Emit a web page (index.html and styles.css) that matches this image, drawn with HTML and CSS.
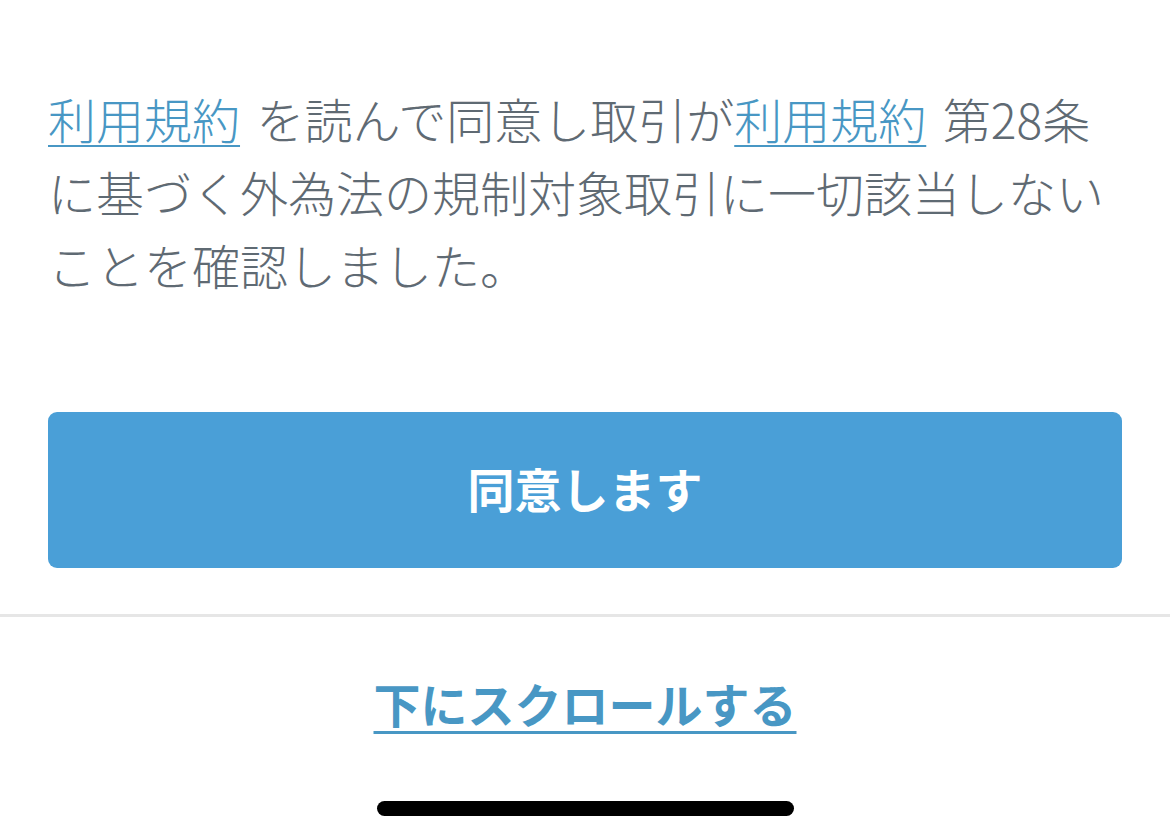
FILE: index.html
```html
<!DOCTYPE html>
<html lang="ja">
<head>
<meta charset="utf-8">
<title>同意</title>
<link rel="stylesheet" href="styles.css">
</head>
<body>
<main class="screen">
  <section class="content">
    <p class="terms"><a class="link" href="#">利用規約</a> を読んで同意し取引が<a class="link" href="#">利用規約</a> 第28条に基づく外為法の規制対象取引に一切該当しないことを確認しました。</p>
    <button class="agree-btn" type="button">同意します</button>
  </section>
  <div class="divider"></div>
  <section class="footer">
    <a class="scroll-link" href="#">下にスクロールする</a>
    <div class="home-indicator"></div>
  </section>
</main>
</body>
</html>
```
FILE: styles.css
```css
html, body {
  margin: 0;
  padding: 0;
  background: #ffffff;
}
body {
  width: 1170px;
  height: 840px;
  overflow: hidden;
  font-family: "Noto Sans CJK JP", "Noto Sans", sans-serif;
}
.screen {
  display: flex;
  flex-direction: column;
}
.content {
  padding: 82px 48px 0;
  display: flex;
  flex-direction: column;
}
.terms {
  margin: 0;
  font-size: 48px;
  font-weight: 300;
  line-height: 73px;
  color: #5f6a73;
  word-spacing: 6px;
}
.link {
  color: #4897c4;
  text-decoration: underline;
  text-decoration-thickness: 2px;
  text-underline-offset: 6px;
}
.agree-btn {
  margin-top: 111px;
  height: 156px;
  border: none;
  border-radius: 9px;
  background: #4a9fd7;
  color: #ffffff;
  font-family: "Noto Sans CJK JP", "Noto Sans", sans-serif;
  font-size: 47px;
  font-weight: 700;
  padding: 0 0 6px;
}
.divider {
  margin-top: 46px;
  height: 3px;
  background: #e6e6e6;
}
.footer {
  display: flex;
  flex-direction: column;
  align-items: center;
}
.scroll-link {
  margin-top: 49px;
  font-size: 47px;
  line-height: 73px;
  font-weight: 700;
  color: #4897c4;
  text-decoration: underline;
  text-decoration-thickness: 3px;
  text-underline-offset: 8px;
}
.home-indicator {
  margin-top: 62px;
  width: 417px;
  height: 15px;
  border-radius: 8px;
  background: #000000;
}
```
